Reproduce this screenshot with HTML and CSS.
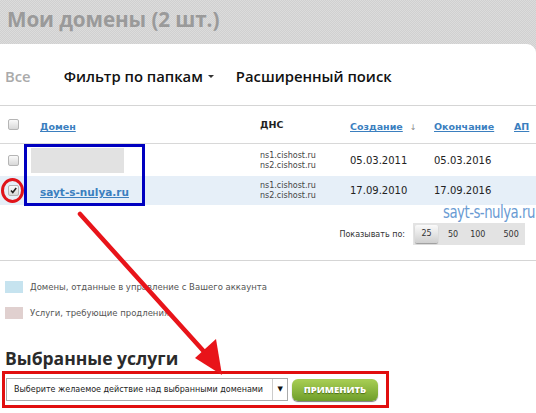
FILE: index.html
```html
<!DOCTYPE html>
<html>
<head>
<meta charset="utf-8">
<link rel="stylesheet" href="styles.css">
</head>
<body>
<div class="page">
  <div class="top"><h1 class="title">Мои домены (2 шт.)</h1></div>
  <div class="panel">
    <div class="tabs">
      <span class="tab tab-all">Все</span>
      <span class="tab">Фильтр по папкам <span class="caret"></span></span>
      <span class="tab">Расширенный поиск</span>
    </div>
    <div class="grid head">
      <div class="c1"><span class="cb"></span></div>
      <div class="c2"><a class="lnk">Домен</a></div>
      <div class="c3 th">ДНС</div>
      <div class="c4"><a class="lnk">Создание</a><span class="sort">↓</span></div>
      <div class="c5"><a class="lnk">Окончание</a></div>
      <div class="c6"><a class="lnk">АП</a></div>
    </div>
    <div class="grid row r1">
      <div class="c1"><span class="cb"></span></div>
      <div class="c2"><span class="blank"></span></div>
      <div class="c3 ns">ns1.cishost.ru<br>ns2.cishost.ru</div>
      <div class="c4 date">05.03.2011</div>
      <div class="c5 date">05.03.2016</div>
      <div class="c6"></div>
    </div>
    <div class="grid row r2">
      <div class="c1"><span class="cb checked"><svg viewBox="0 0 9 9" width="9" height="9"><path d="M2 4.5 L3.8 6.5 L7.2 2" fill="none" stroke="#222" stroke-width="1.6"/></svg></span></div>
      <div class="c2"><a class="lnk">sayt-s-nulya.ru</a></div>
      <div class="c3 ns">ns1.cishost.ru<br>ns2.cishost.ru</div>
      <div class="c4 date">17.09.2010</div>
      <div class="c5 date">17.09.2016</div>
      <div class="c6"></div>
    </div>
    <div class="pagerrow">
      <span class="showlbl">Показывать по:</span>
      <div class="pager">
        <span class="pg active">25</span>
        <span class="pg">50</span>
        <span class="pg">100</span>
        <span class="pg">500</span>
      </div>
    </div>
    <div class="legend">
      <div class="leg"><span class="sw blue"></span>Домены, отданные в управление с Вашего аккаунта</div>
      <div class="leg"><span class="sw pink"></span>Услуги, требующие продления</div>
    </div>
    <h2 class="sub">Выбранные услуги</h2>
    <div class="actions">
      <div class="select"><span>Выберите желаемое действие над выбранными доменами</span><span class="sel-arrow">▼</span></div>
      <span class="apply">ПРИМЕНИТЬ</span>
    </div>
  </div>
  <div class="mark-blue"></div>
  <div class="mark-circle"></div>
  <div class="watermark">sayt-s-nulya.ru</div>
  <svg class="arrow" width="536" height="413" viewBox="0 0 536 413">
    <line x1="80" y1="214" x2="208" y2="356" stroke="#e8141a" stroke-width="4.5" stroke-linecap="round"/>
    <polygon points="222,375 195,358 216,339" fill="#e8141a"/>
  </svg>
</div>
</body>
</html>
```
FILE: styles.css
```css
html, body { margin: 0; padding: 0; }
body { width: 536px; height: 413px; overflow: hidden; background: #fff; font-family: "DejaVu Sans", Verdana, sans-serif; }
.page { position: relative; width: 536px; height: 413px; background-color: #d6d6d6; background-image: repeating-conic-gradient(#d0d0d0 0 25%, #dcdcdc 0 50%); background-size: 2px 2px; }
.top { height: 44px; padding-left: 7px; box-sizing: border-box; }
.title { margin: 0; padding-top: 4px; font-family: "Open Sans", sans-serif; font-weight: 700; font-size: 20.7px; color: #9a9a9a; line-height: 30px; letter-spacing: -0.1px; }
.panel { background: #fff; border-top-right-radius: 9px; height: 369px; }
.tabs { height: 62px; display: flex; align-items: center; border-bottom: 1px solid #d5d5d5; box-sizing: border-box; padding-left: 5px; padding-top: 2px; }
.tab { font-family: "Open Sans", sans-serif; font-weight: 600; font-size: 14.8px; color: #111; margin-right: 22px; display: flex; align-items: center; }
.tab-all { color: #aaa; margin-right: 33px; }
.caret { display: inline-block; width: 0; height: 0; border-left: 3px solid transparent; border-right: 3px solid transparent; border-top: 3px solid #333; margin-left: 5px; margin-top: 2px; }
.grid { display: grid; grid-template-columns: 40px 220px 90px 84px 80px 22px; align-items: center; }
.head { height: 37px; border-bottom: 1px solid #d8d8d8; }
.r1 { height: 32px; }
.r2 { height: 29px; background: #e6eff8; }
.c1 { padding-left: 8px; display: flex; align-items: center; }
.cb { width: 9px; height: 9px; border: 1px solid #b5b5b5; border-radius: 2px; background: linear-gradient(#fafafa, #d8d8d8); display: inline-flex; align-items: center; justify-content: center; box-sizing: content-box; }
.cb svg { display: block; }
.lnk { color: #3b7fbf; text-decoration: underline; font-weight: 700; font-size: 9.5px; }
.r2 .lnk { font-size: 10.5px; }
.th { font-weight: 700; font-size: 9.5px; color: #222; }
.sort { font-size: 8px; color: #888; margin-left: 7px; }
.ns { font-size: 8px; color: #444; line-height: 10px; padding-top: 1px; }
.date { font-size: 10px; color: #222; }
.blank { display: block; width: 93px; height: 25px; margin-left: -9px; background: #e2e2e2; }
.pagerrow { height: 56px; display: flex; justify-content: flex-end; align-items: flex-start; padding-right: 11px; padding-top: 18px; box-sizing: border-box; border-bottom: 1px solid #d5d5d5; }
.showlbl { font-size: 8px; color: #333; margin-top: 7px; margin-right: 8px; }
.pager { width: 112px; height: 22px; background: #e3e3e3; display: flex; align-items: center; padding-left: 2px; box-sizing: border-box; }
.pg { font-size: 8px; color: #333; }
.pg.active { width: 23px; height: 18px; line-height: 18px; text-align: center; border-radius: 2px; background: linear-gradient(#fafafa, #cfcfcf); box-shadow: 0 1px 1px #999; }
.pg:nth-child(2) { margin-left: 10px; }
.pg:nth-child(3) { margin-left: 12px; }
.pg:nth-child(4) { margin-left: 18px; }
.legend { padding: 19px 0 0 5px; }
.leg { display: flex; align-items: center; font-size: 8.5px; color: #555; height: 13px; margin-bottom: 13px; }
.sw { width: 18px; height: 12px; margin-right: 7px; }
.sw.blue { background: #c6e3ef; }
.sw.pink { background: #e0d0cf; }
.sub { margin: 28px 0 0 5px; font-family: "Open Sans", sans-serif; font-weight: 700; font-size: 17.5px; color: #2b2b2b; line-height: 22px; }
.actions { margin: 2px 0 0 2px; width: 387px; height: 37px; border: 3px solid #e10e0e; box-sizing: border-box; display: flex; align-items: center; padding-left: 1px; }
.select { width: 282px; height: 23px; border: 1px solid #aaa; box-sizing: border-box; background: #fff; display: flex; align-items: center; justify-content: space-between; padding: 0 4px 0 7px; font-size: 8px; color: #222; }
.sel-arrow { font-size: 7px; color: #111; border-left: 1px solid #ccc; padding-left: 5px; line-height: 21px; }
.apply { margin-left: 4px; width: 86px; height: 22px; border-radius: 6px; background: linear-gradient(#a9cf55, #6f9e2a); color: #fff; font-family: "Open Sans", sans-serif; font-weight: 800; font-size: 9.5px; display: flex; align-items: center; justify-content: center; text-shadow: 0 1px 1px #4a6e18; box-shadow: 0 1px 1px #7a7a7a; }
.mark-blue { position: absolute; left: 24px; top: 144px; width: 121px; height: 62px; border: 3px solid #0000c0; box-sizing: border-box; }
.mark-circle { position: absolute; left: 1px; top: 178px; width: 23px; height: 25px; border: 3px solid #e0141a; border-radius: 50%; box-sizing: border-box; }
.watermark { position: absolute; left: 443px; top: 201px; white-space: nowrap; font-family: "DejaVu Sans Condensed", "DejaVu Sans", sans-serif; font-stretch: condensed; font-size: 18px; color: #6a9bd3; letter-spacing: -0.6px; transform: scaleX(0.82); transform-origin: left top; }
.arrow { position: absolute; left: 0; top: 0; pointer-events: none; }
```
